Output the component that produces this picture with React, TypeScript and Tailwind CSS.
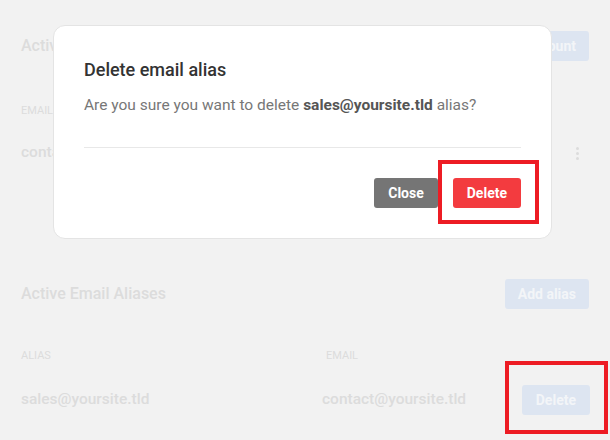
import { useState } from "react";

const faded = "text-[#dcdcdc]";

function Annotation({ className }: { className: string }) {
  // red highlight box drawn over the screenshot
  return <span className={`pointer-events-none absolute border-[4px] border-[#ed1c24] ${className}`} />;
}

export default function App() {
  const [open, setOpen] = useState(true);

  return (
    <div className="relative h-[440px] w-[610px] overflow-hidden bg-[#f2f2f2] font-['Roboto','Liberation_Sans',sans-serif]">
      {/* page behind the overlay */}
      <div className="px-[21px] pt-[31px]">
        <section>
          <div className="flex h-[30px] items-center justify-between">
            <h2 className={`text-[16px] font-medium ${faded}`}>Active Email Accounts</h2>
            <button className="h-[30px] rounded-[3px] bg-[#dde5f1] px-[13px] text-[14px] font-bold text-[#f3f5f8]">
              Add account
            </button>
          </div>
          <div className={`mt-[43px] text-[11px] leading-[13px] ${faded}`}>EMAIL</div>
          <div className="mt-[21px] flex h-[30px] items-center justify-between">
            <span className={`text-[15.5px] font-medium ${faded}`}>contact@yoursite.tld</span>
            <span className="mr-[10px] flex flex-col gap-[2px]">
              <i className="h-[3px] w-[3px] rounded-full bg-[#dcdcdc]" />
              <i className="h-[3px] w-[3px] rounded-full bg-[#dcdcdc]" />
              <i className="h-[3px] w-[3px] rounded-full bg-[#dcdcdc]" />
            </span>
          </div>
        </section>

        <section className="mt-[111px]">
          <div className="flex h-[30px] items-center justify-between">
            <h2 className={`text-[16px] font-medium ${faded}`}>Active Email Aliases</h2>
            <button className="h-[30px] rounded-[3px] bg-[#dde5f1] px-[13px] text-[14px] font-bold text-[#f3f5f8]">
              Add alias
            </button>
          </div>
          <div className={`mt-[40px] grid grid-cols-[305px_1fr] text-[11px] leading-[13px] ${faded}`}>
            <span>ALIAS</span>
            <span>EMAIL</span>
          </div>
          <div className="mt-[23px] grid h-[30px] grid-cols-[301px_1fr_auto] items-center">
            <span className={`text-[15.5px] font-medium ${faded}`}>sales@yoursite.tld</span>
            <span className={`text-[15.5px] font-medium ${faded}`}>contact@yoursite.tld</span>
            <span className="relative mr-[-1px]">
              <button className="h-[30px] rounded-[3px] bg-[#dde5f1] px-[14px] text-[14px] font-bold text-[#f3f5f8]">
                Delete
              </button>
              <Annotation className="-bottom-[19px] -left-[17px] -right-[18px] -top-[24px]" />
            </span>
          </div>
        </section>
      </div>

      {/* modal */}
      {open && (
        <div className="absolute left-[53px] top-[25px] w-[499px] rounded-[12px] border border-[#e4e4e4] bg-white px-[30px] pb-[30px] pt-[33px]">
          <h3 className="text-[18px] font-medium leading-[22px] text-[#333]">Delete email alias</h3>
          <p className="mt-[14px] text-[15.5px] leading-[20px] text-[#777]">
            Are you sure you want to delete <b className="font-bold text-[#555]">sales@yoursite.tld</b> alias?
          </p>
          <hr className="mt-[32px] border-[#e8e8e8]" />
          <div className="mt-[30px] flex justify-end gap-[15px]">
            <button
              onClick={() => setOpen(false)}
              className="h-[30px] rounded-[3px] bg-[#757575] px-[14px] text-[14px] font-bold text-white"
            >
              Close
            </button>
            <span className="relative">
              <button className="h-[30px] rounded-[3px] bg-[#f33b3f] px-[14px] text-[14px] font-bold text-white">
                Delete
              </button>
              <Annotation className="-bottom-[16px] -left-[15px] -right-[18px] -top-[18px]" />
            </span>
          </div>
        </div>
      )}
    </div>
  );
}
